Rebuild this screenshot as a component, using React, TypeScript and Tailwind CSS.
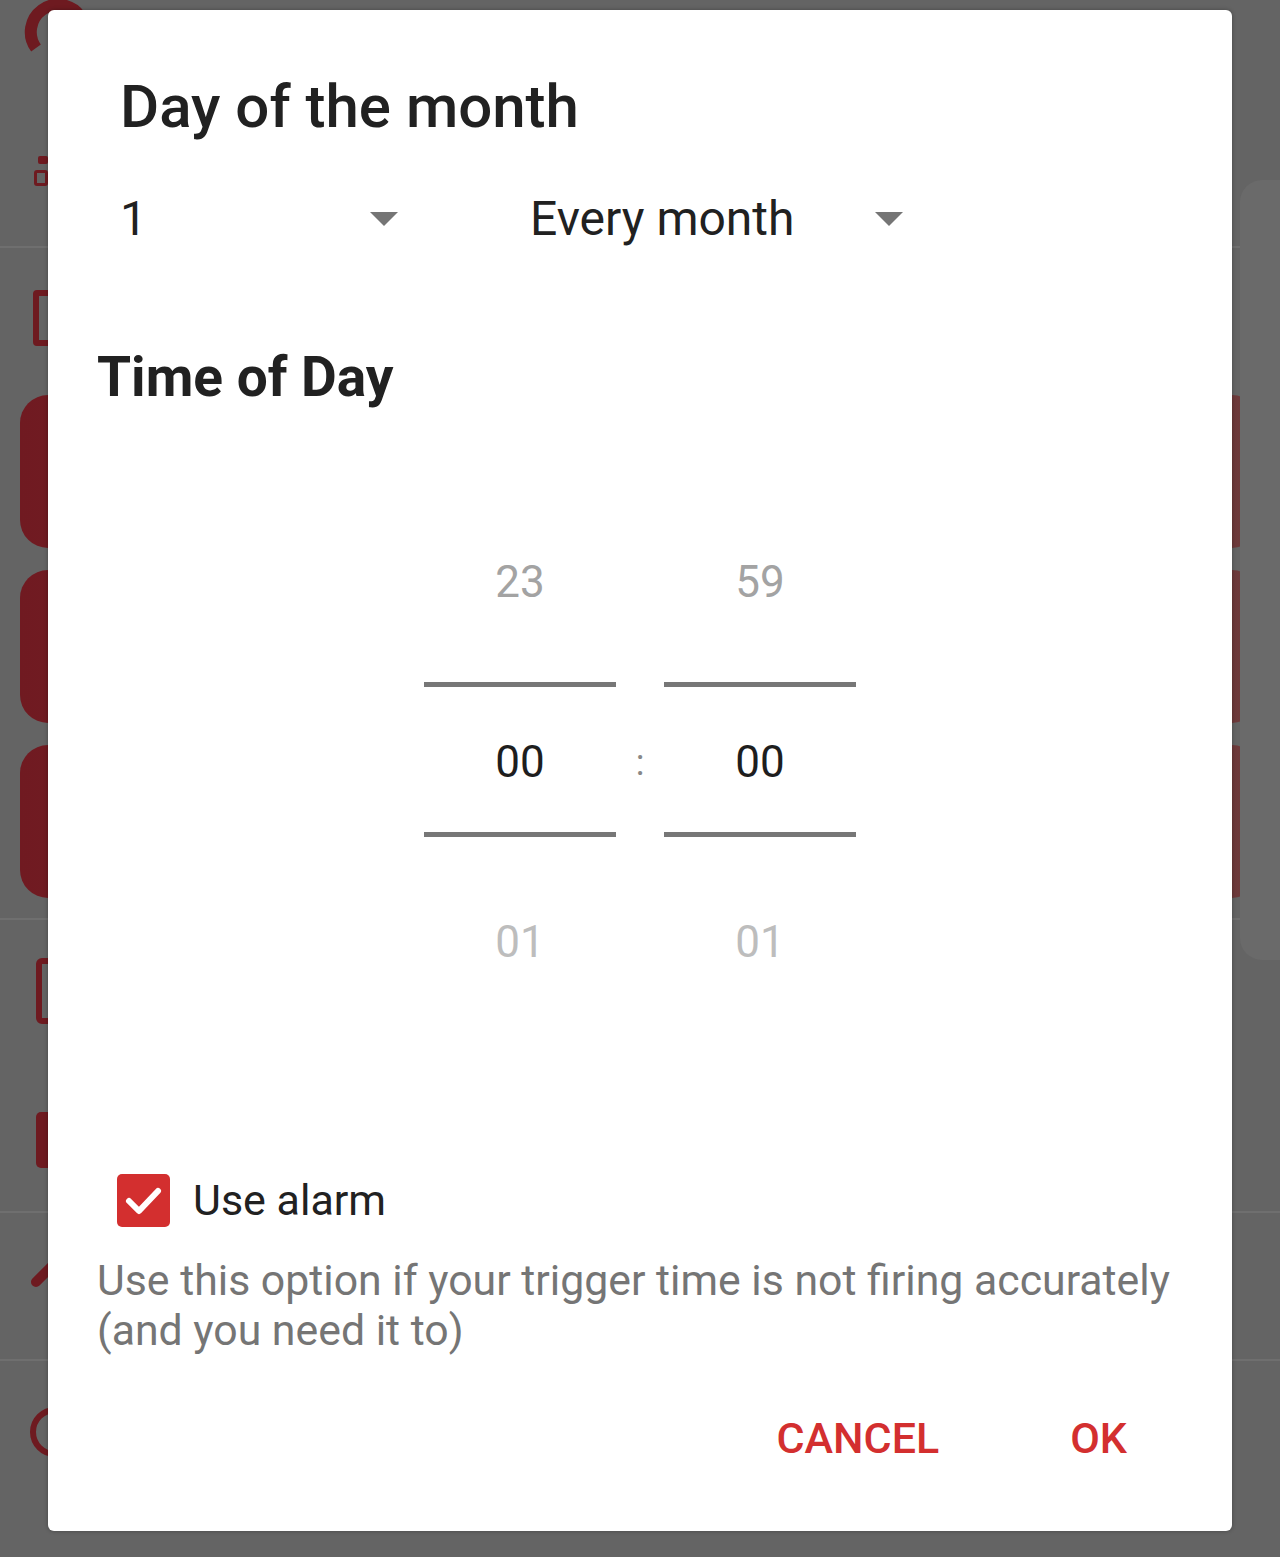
import React from 'react';

const font = { fontFamily: 'Roboto, "Noto Sans", sans-serif' };

const Arrow: React.FC = () => (
  <svg width="28" height="14" viewBox="0 0 28 14">
    <polygon points="0,0 28,0 14,14" fill="#757575" />
  </svg>
);

const Dropdown: React.FC<{ value: string; width: string }> = ({ value, width }) => (
  <div className={`flex items-center justify-between ${width}`}>
    <span className="text-[48px] leading-none text-[#212121]">{value}</span>
    <Arrow />
  </div>
);

const PickerColumn: React.FC<{ top: string; value: string; bottom: string }> = ({ top, value, bottom }) => (
  <div className="flex w-[192px] flex-col">
    <div className="flex h-[180px] items-center justify-center text-[44px] leading-none text-[#a3a3a3]">{top}</div>
    <div className="h-[10px]" />
    <div className="h-[5px] bg-[#777777]" />
    <div className="flex h-[145px] items-center justify-center pt-[5px] text-[44px] leading-none text-[#1e1e1e]">{value}</div>
    <div className="h-[5px] bg-[#777777]" />
    <div className="flex h-[195px] items-center justify-center pt-[15px] text-[44px] leading-none text-[#bdbdbd]">{bottom}</div>
  </div>
);

const Background: React.FC = () => (
  <div className="flex h-full flex-col">
    <div className="relative h-[248px] border-b-2 border-[#6f6f6f]">
      <svg className="ml-[22px] -mt-[14px]" width="70" height="70" viewBox="0 0 70 70">
        <path d="M14 62 A26 26 0 1 1 58 30" fill="none" stroke="#6e1a20" strokeWidth="12" />
      </svg>
      <div className="ml-[38px] mt-[100px] h-[8px] w-[10px] rounded-[2px] bg-[#6e1a20]" />
      <div className="ml-[34px] mt-[6px] h-[16px] w-[14px] rounded-[3px] border-[3px] border-[#6e1a20]" />
    </div>
    <div className="flex h-[147px] items-start pt-[42px]">
      <div className="ml-[33px] h-[56px] w-[30px] rounded-[4px] border-[6px] border-[#6e1a20]" />
    </div>
    <div className="flex flex-col gap-[22px] px-[20px]">
      <div className="h-[153px] rounded-[28px] bg-gradient-to-r from-[#701a21] to-[#6d3a3b]" />
      <div className="h-[153px] rounded-[28px] bg-gradient-to-r from-[#701a21] to-[#6d3a3b]" />
      <div className="h-[153px] rounded-[28px] bg-gradient-to-r from-[#701a21] to-[#6d3a3b]" />
    </div>
    <div className="mt-[20px] h-[295px] border-t-2 border-b-2 border-[#6f6f6f] px-[36px] pt-[38px]">
      <div className="h-[66px] w-[24px] rounded-[6px] border-[6px] border-[#6e1a20]" />
      <div className="mt-[88px] h-[56px] w-[24px] rounded-[5px] bg-[#6e1a20]" />
    </div>
    <div className="h-[148px] border-b-2 border-[#6f6f6f] px-[26px] pt-[52px]">
      <div className="h-[10px] w-[44px] -rotate-45 rounded-full bg-[#6e1a20]" />
    </div>
    <div className="px-[30px] pt-[46px]">
      <div className="h-[50px] w-[50px] rounded-full border-[6px] border-[#6e1a20]" />
    </div>
  </div>
);

export default function App() {
  return (
    <div className="relative h-[1557px] w-full overflow-hidden bg-[#646464]" style={font}>
      <Background />
      <div className="absolute right-0 top-[180px] h-[780px] w-[40px] rounded-l-[22px] bg-[#6a6a6a]" />
      <div className="absolute left-[48px] top-[10px] flex h-[1521px] w-[1184px] flex-col rounded-[6px] bg-white shadow-[0_0_4px_rgba(0,0,0,0.3)]">
        <h2 className="ml-[72px] mt-[67px] text-[60px] font-medium leading-none text-[#212121]">Day of the month</h2>
        <div className="ml-[72px] mt-[58px] flex h-[48px] items-center">
          <Dropdown value="1" width="w-[278px]" />
          <div className="w-[132px]" />
          <Dropdown value="Every month" width="w-[373px]" />
        </div>
        <h3 className="ml-[49px] mt-[107px] text-[55px] font-bold leading-none text-[#212121]">Time of Day</h3>
        <div className="mt-[87px] flex justify-center">
          <PickerColumn top="23" value="00" bottom="01" />
          <div className="flex w-[48px] justify-center pt-[253px] text-[36px] leading-none text-[#888888]">:</div>
          <PickerColumn top="59" value="00" bottom="01" />
        </div>
        <div className="ml-[69px] mt-[142px] flex items-center gap-[23px]">
          <div className="flex h-[53px] w-[53px] items-center justify-center rounded-[5px] bg-[#d32f2f]">
            <svg width="53" height="53" viewBox="0 0 53 53">
              <path d="M12 27 L22 37 L41 17" fill="none" stroke="white" strokeWidth="6" strokeLinecap="round" strokeLinejoin="round" />
            </svg>
          </div>
          <span className="text-[43px] leading-none text-[#212121]">Use alarm</span>
        </div>
        <p className="ml-[49px] mr-[10px] mt-[28px] text-[42.8px] leading-[50px] text-[#757575]">
          Use this option if your trigger time is not firing accurately (and you need it to)
        </p>
        <div className="mt-[62px] flex justify-end gap-[131px] pr-[105px]">
          <button className="text-[43px] font-medium uppercase leading-none text-[#d32f2f]">Cancel</button>
          <button className="text-[43px] font-medium uppercase leading-none text-[#d32f2f]">OK</button>
        </div>
      </div>
    </div>
  );
}
